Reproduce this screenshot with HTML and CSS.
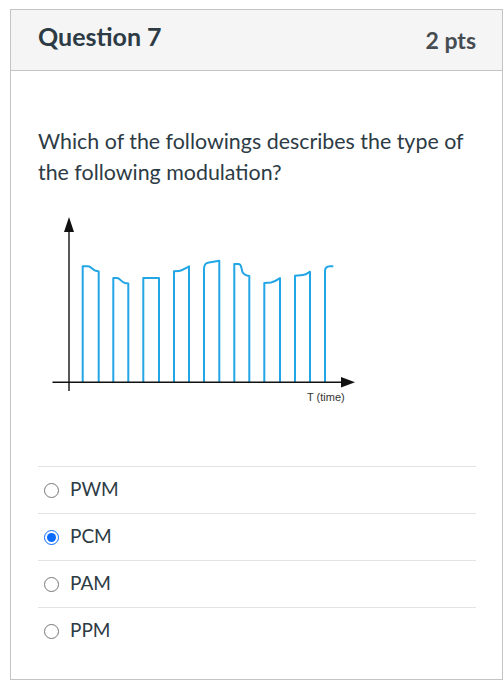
FILE: index.html
```html
<!DOCTYPE html>
<html>
<head>
<meta charset="utf-8">
<link rel="stylesheet" href="styles.css">
</head>
<body>
<div class="card">
  <div class="header">
    <h2 class="title">Question 7</h2>
    <span class="pts">2 pts</span>
  </div>
  <div class="body">
    <p class="text">Which of the followings describes the type of the following modulation?</p>
    <svg class="chart" width="330" height="200" viewBox="38 210 330 200" xmlns="http://www.w3.org/2000/svg">
      <g fill="none" stroke="#22a6e6" stroke-width="2" stroke-linejoin="round">
        <path d="M82.7,383 V267.3 H88 C91,267.3 92,270.5 95,271.5 L98.7,272.5 V383"/>
        <path d="M113.3,383 V279 H117 C120,279 121,283 125,284 L128.3,284.5 V383"/>
        <path d="M143.3,383 V279 H159 V383"/>
        <path d="M174,383 V272.3 L179,272 C182,271.8 184,270 189,267.3 V383"/>
        <path d="M204,383 V270 C204,265 206,264 209,263.5 L219.3,261.7 V383"/>
        <path d="M234.3,383 V265 H238.5 C242,265 241,270 242.5,273 C243.5,275.5 245,276 247,276.5 L249.3,277 V383"/>
        <path d="M264.3,383 V284 L271,283.5 C275,283 277,281 280,279 V383"/>
        <path d="M295,383 V276.7 L303,276 C306,275.7 308,274 310,272.7 V383"/>
        <path d="M325,383 V272 C325,268.5 327,267.5 330,267.3 L333.3,267.3"/>
      </g>
      <g stroke="#111" stroke-width="1.4">
        <line x1="69" y1="230" x2="69" y2="392"/>
        <line x1="52.5" y1="383.3" x2="343" y2="383.3"/>
      </g>
      <polygon points="69,218 64,233 74,233" fill="#111"/>
      <polygon points="355,383.3 341,378 341,388.6" fill="#111"/>
      <text x="307" y="401.5" class="axis-label">T (time)</text>
    </svg>
    <div class="answers">
      <label class="answer"><input type="radio" name="q7" class="radio"><span>PWM</span></label>
      <label class="answer"><input type="radio" name="q7" class="radio" checked><span>PCM</span></label>
      <label class="answer"><input type="radio" name="q7" class="radio"><span>PAM</span></label>
      <label class="answer"><input type="radio" name="q7" class="radio"><span>PPM</span></label>
    </div>
  </div>
</div>
</body>
</html>
```

FILE: styles.css
```css
html, body {
  margin: 0;
  padding: 0;
  background: #fff;
}
body {
  font-family: Lato, "Open Sans", "Liberation Sans", sans-serif;
  color: #2d3b45;
}
.card {
  box-sizing: border-box;
  margin: 9px 0 0 10px;
  width: 493px;
  height: 671px;
  border: 1px solid #c4c4c4;
  background: #fff;
}
.header {
  box-sizing: border-box;
  height: 61px;
  background: #f5f5f5;
  border-bottom: 1px solid #c4c4c4;
  display: flex;
  justify-content: space-between;
  align-items: flex-start;
  padding: 11px 26px 0 27px;
}
.title {
  margin: 0;
  font-size: 25px;
  line-height: 30px;
  font-weight: 700;
  color: #2d3b45;
}
.pts {
  margin-top: 4px;
  font-size: 23px;
  line-height: 30px;
  font-weight: 700;
  color: #464c51;
}
.body {
  padding: 0 26px 0 27px;
}
.text {
  margin: 55px 0 0;
  font-size: 21.4px;
  line-height: 31px;
}
.chart {
  display: block;
  margin-top: 21px;
}
.axis-label {
  font-family: "Liberation Sans", Arial, sans-serif;
  font-size: 11px;
  fill: #333;
}
.answers {
  margin-top: 57px;
}
.answer {
  box-sizing: border-box;
  height: 47px;
  padding-bottom: 3px;
  border-top: 1px solid #e3e3e3;
  display: flex;
  align-items: center;
  font-size: 19px;
}
.radio {
  width: 15px;
  height: 15px;
  margin: 4px 11px 0 6px;
  accent-color: #0a6cff;
}
```
